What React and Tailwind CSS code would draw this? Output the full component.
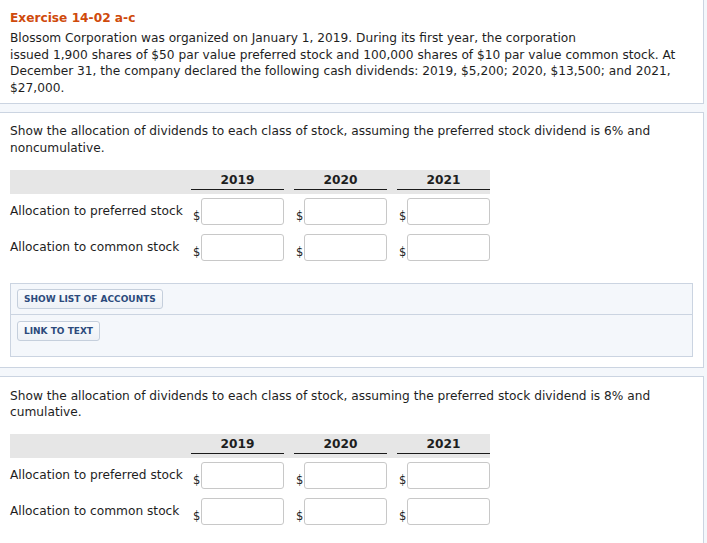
const YEARS = ["2019", "2020", "2021"];
const ROWS = ["Allocation to preferred stock", "Allocation to common stock"];

function AllocationTable() {
  return (
    <div className="w-[480px]">
      <div className="flex h-[24px] bg-[#e6e6e6]">
        <div className="w-[181px] shrink-0" />
        <div className="flex gap-[10px]">
          {YEARS.map((y) => (
            <div
              key={y}
              className="w-[93px] h-[20px] border-b-[1.5px] border-[#1a1a1a] text-center font-bold text-[12.2px] leading-[19px] pt-px"
            >
              {y}
            </div>
          ))}
        </div>
      </div>
      {ROWS.map((label) => (
        <div key={label} className="flex items-center h-[36px]">
          <div className="w-[181px] shrink-0 text-[12.2px] leading-[16px] whitespace-nowrap pb-[2px]">{label}</div>
          <div className="flex gap-[10px]">
            {YEARS.map((y) => (
              <div key={y} className="w-[93px] flex items-end">
                <span className="w-[10px] pl-[2px] text-[11.5px] leading-[12px] mb-[3px]">$</span>
                <input
                  type="text"
                  className="w-[83px] h-[27px] bg-white border border-[#c8c8c8] rounded-[3px] outline-none"
                />
              </div>
            ))}
          </div>
        </div>
      ))}
    </div>
  );
}

function ToolButton({ children }) {
  return (
    <button className="h-[20px] px-[6px] bg-gradient-to-b from-[#fafbfd] to-[#edf1f6] border border-[#c5cfdc] rounded-[3px] text-[9px] font-bold text-[#2c4a7c] uppercase leading-[18px]">
      {children}
    </button>
  );
}

export default function App() {
  return (
    <div
      className="w-[707px] h-[543px] overflow-hidden bg-[#f4f7fb] text-[#1e1e1e]"
      style={{ fontFamily: '"DejaVu Sans", Verdana, sans-serif' }}
    >
      <div className="-ml-px -mt-px w-[705px] bg-white border border-[#cbd4e1] pl-[10px] pt-[10px] pb-[7px]">
        <h2 className="text-[12.2px] font-bold text-[#cf4a0c] leading-[16px]">Exercise 14-02 a-c</h2>
        <p className="mt-[4px] text-[12.2px] leading-[16.6px] whitespace-nowrap">
          Blossom Corporation was organized on January 1, 2019. During its first year, the corporation
          <br />
          issued 1,900 shares of $50 par value preferred stock and 100,000 shares of $10 par value common stock. At
          <br />
          December 31, the company declared the following cash dividends: 2019, $5,200; 2020, $13,500; and 2021,
          <br />
          $27,000.
        </p>
      </div>

      <div className="-ml-px mt-[8px] w-[705px] bg-white border border-[#cbd4e1] pl-[10px] pt-[10px] pb-[10px]">
        <p className="text-[12.2px] leading-[16.6px] whitespace-nowrap">
          Show the allocation of dividends to each class of stock, assuming the preferred stock dividend is 6% and
          <br />
          noncumulative.
        </p>
        <div className="mt-[13px]">
          <AllocationTable />
        </div>
        <div className="mt-[17px] w-[683px] border border-[#cbd4e1] bg-[#f4f7fb]">
          <div className="flex px-[6px] pt-[5px] pb-[5px] border-b border-[#cbd4e1]">
            <ToolButton>Show List of Accounts</ToolButton>
          </div>
          <div className="flex px-[6px] pt-[6px] pb-[15px]">
            <ToolButton>Link to Text</ToolButton>
          </div>
        </div>
      </div>

      <div className="-ml-px mt-[8px] w-[705px] bg-white border border-[#cbd4e1] pl-[10px] pt-[11px] pb-[40px]">
        <p className="text-[12.2px] leading-[16.6px] whitespace-nowrap">
          Show the allocation of dividends to each class of stock, assuming the preferred stock dividend is 8% and
          <br />
          cumulative.
        </p>
        <div className="mt-[13px]">
          <AllocationTable />
        </div>
      </div>
    </div>
  );
}
